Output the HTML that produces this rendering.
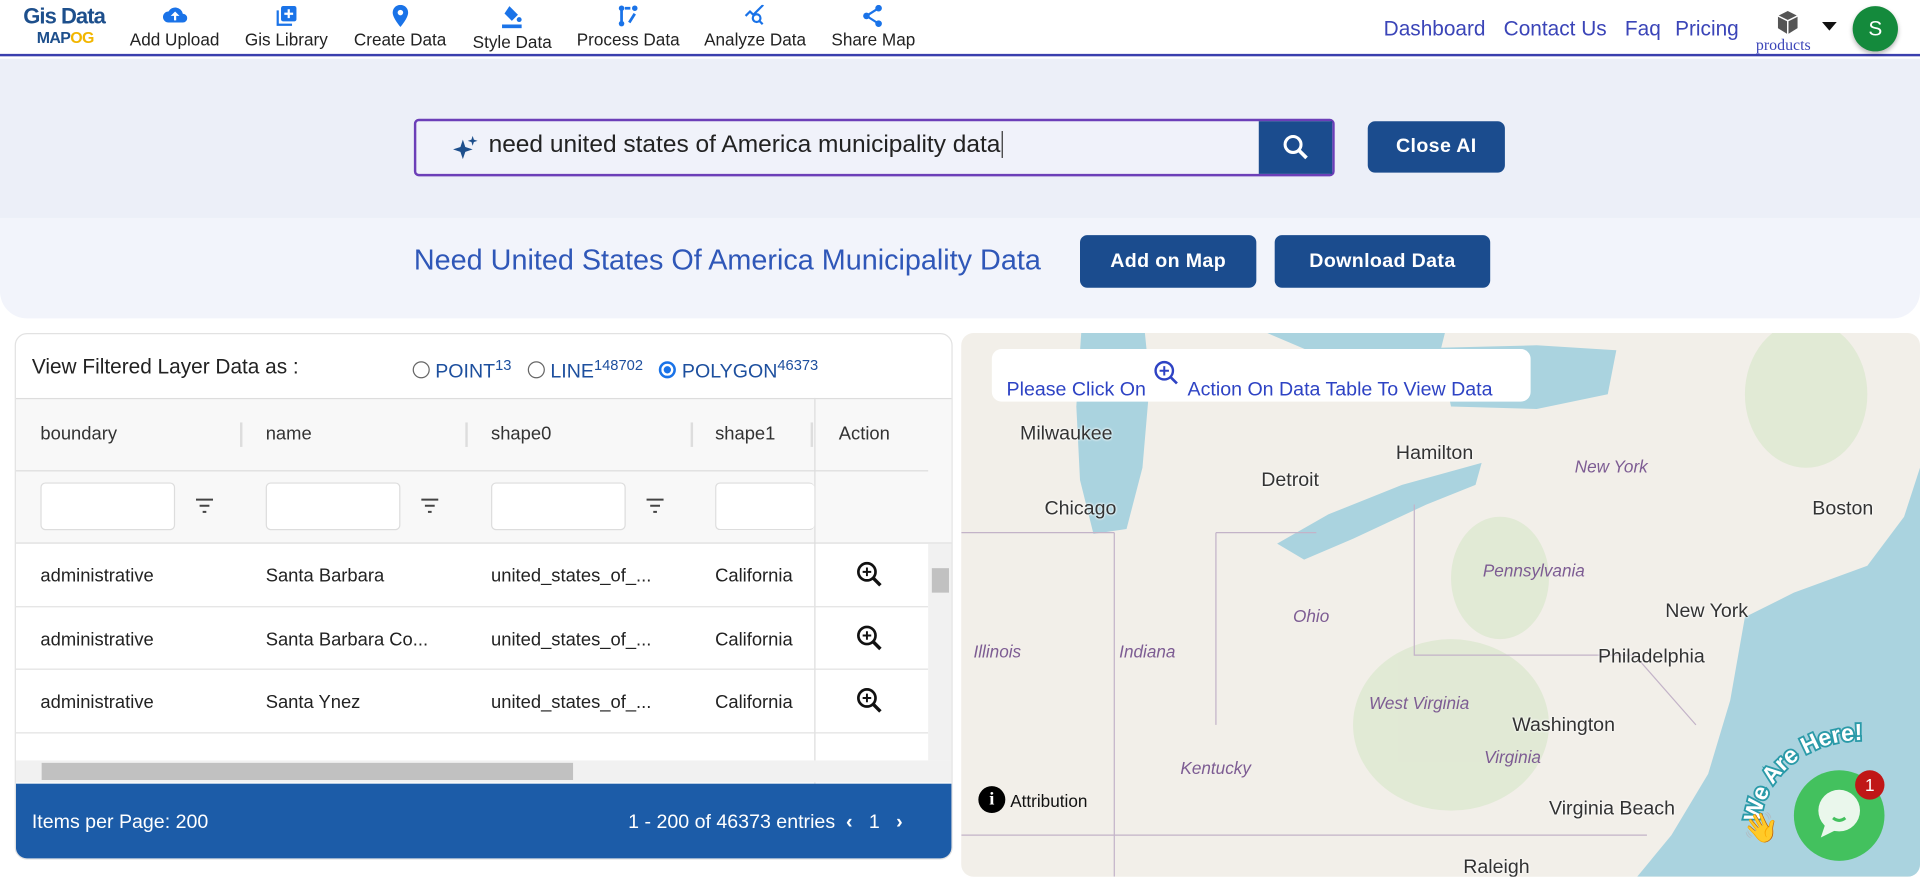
<!DOCTYPE html>
<html><head><meta charset="utf-8"><style>
*{box-sizing:border-box;margin:0;padding:0}
html,body{width:1920px;height:889px;overflow:hidden;background:#fff;font-family:"Liberation Sans",sans-serif}
#w{position:absolute;left:0;top:0;width:1568px;height:726px;transform:scale(1.22449);transform-origin:0 0}
.a{position:absolute}
.nav{left:0;top:0;width:1568px;height:46px;background:#fff;border-bottom:2px solid #3a3fae}
.ni{position:absolute;top:4px;text-align:center;font-size:14px;color:#222;white-space:nowrap}
.ni svg{display:block;margin:0 auto 2px}
.rl{position:absolute;top:14px;font-size:17px;color:#3b45b8}
.btn{position:absolute;background:#1b4c8e;color:#fff;border-radius:6px;font-size:16px;font-weight:bold;display:flex;align-items:center;justify-content:center;letter-spacing:.3px}
.th{position:absolute;font-size:15px;color:#333}
.td{position:absolute;font-size:15px;color:#222;white-space:nowrap}
.fi{position:absolute;width:110px;height:39px;border:1px solid #ddd;border-radius:4px;background:#fff}
.city{position:absolute;font-size:16px;color:#333;white-space:nowrap;text-shadow:0 0 2px #fff,0 0 2px #fff}
.st{position:absolute;font-size:14px;color:#7d5c93;font-style:italic;white-space:nowrap}
</style></head><body><div id="w">
<div class="a nav">
 <div class="a" style="left:19px;top:4px;font-weight:bold;font-size:18px;color:#1d4f8c;line-height:18px;letter-spacing:-.8px">Gis Data</div>
 <div class="a" style="left:30px;top:23px;font-weight:bold;font-size:13px;color:#1d4f8c;letter-spacing:-.5px">MAP<span style="color:#f2b600">OG</span></div>
 <div class="ni" style="left:106px"><svg width="22" height="18" viewBox="0 0 24 20"><path d="M19 8a7 7 0 0 0-13-2A5 5 0 0 0 6 16h13a4 4 0 0 0 0-8z" fill="#1a73e8"/><path d="M12 6l-4 4h3v4h2v-4h3z" fill="#fff"/></svg>Add Upload</div>
 <div class="ni" style="left:200px"><svg width="20" height="18" viewBox="0 0 20 20"><rect x="5" y="1" width="14" height="14" rx="2" fill="#1a73e8"/><path d="M2 5v13h13" stroke="#1a73e8" stroke-width="2" fill="none"/><path d="M12 4v8M8 8h8" stroke="#fff" stroke-width="2"/></svg>Gis Library</div>
 <div class="ni" style="left:289px"><svg width="16" height="18" viewBox="0 0 16 20"><path d="M8 0a7 7 0 0 0-7 7c0 5 7 13 7 13s7-8 7-13a7 7 0 0 0-7-7z" fill="#1a73e8"/><circle cx="8" cy="7" r="2.5" fill="#fff"/></svg>Create Data</div>
 <div class="ni" style="left:386px"><svg width="20" height="20" viewBox="0 0 20 20"><path d="M8 1l7 7-5 5-6-6z" fill="#1a73e8"/><circle cx="16" cy="12" r="2" fill="#1a73e8"/><rect x="2" y="16" width="16" height="3" fill="#1a73e8"/></svg>Style Data</div>
 <div class="ni" style="left:471px"><svg width="18" height="18" viewBox="0 0 20 20"><circle cx="4" cy="3" r="2.5" fill="#1a73e8"/><circle cx="4" cy="17" r="2.5" fill="#1a73e8"/><circle cx="16" cy="3" r="2.5" fill="#1a73e8"/><path d="M4 5v10M7 3h5M16 8l-5 8" stroke="#1a73e8" stroke-width="2.5"/></svg>Process Data</div>
 <div class="ni" style="left:575px"><svg width="20" height="18" viewBox="0 0 20 20"><path d="M1 10l4-4 3 3 9-9" stroke="#1a73e8" stroke-width="2" fill="none"/><circle cx="11" cy="12" r="3.5" stroke="#1a73e8" stroke-width="2" fill="none"/><path d="M13.5 14.5l3 3" stroke="#1a73e8" stroke-width="2"/></svg>Analyze Data</div>
 <div class="ni" style="left:679px"><svg width="18" height="18" viewBox="0 0 20 20"><circle cx="15" cy="3" r="3" fill="#1a73e8"/><circle cx="4" cy="10" r="3" fill="#1a73e8"/><circle cx="15" cy="17" r="3" fill="#1a73e8"/><path d="M15 3L4 10l11 7" stroke="#1a73e8" stroke-width="2" fill="none"/></svg>Share Map</div>
 <div class="rl" style="left:1130px">Dashboard</div>
 <div class="rl" style="left:1228px">Contact Us</div>
 <div class="rl" style="left:1327px">Faq</div>
 <div class="rl" style="left:1368px">Pricing</div>
 <svg class="a" style="left:1451px;top:9px" width="18" height="19" viewBox="0 0 18 19"><path d="M9 0l8 4v10l-8 5-8-5V4z" fill="#555"/><path d="M1 4l8 4 8-4M9 8v11" stroke="#fff" stroke-width="1.2" fill="none"/></svg>
 <div class="a" style="left:1434px;top:29px;font-family:'Liberation Serif',serif;font-size:13px;color:#3b45b8">products</div>
 <div class="a" style="left:1488px;top:18px;width:0;height:0;border-left:6px solid transparent;border-right:6px solid transparent;border-top:7px solid #111"></div>
 <div class="a" style="left:1513px;top:5px;width:37px;height:37px;border-radius:50%;background:#148a3c;color:#fff;font-size:17px;display:flex;align-items:center;justify-content:center;box-shadow:0 2px 4px rgba(0,0,0,.3)">S</div>
</div>
<div class="a" style="left:0;top:48px;width:1568px;height:212px;background:#f2f4fb;border-radius:0 0 22px 22px"></div>
<div class="a" style="left:0;top:48px;width:1568px;height:130px;background:#eceff8"></div>
<div class="a" style="left:338px;top:97px;width:752px;height:47px;border:2px solid #6c3fb8;border-radius:4px;background:#f0f2fa"></div>
<svg class="a" style="left:369px;top:110px" width="22" height="22" viewBox="0 0 22 22"><path d="M9 4l2 6 6 2-6 2-2 6-2-6-6-2 6-2z" fill="#1d4f8c"/><path d="M17 1l1 3 3 1-3 1-1 3-1-3-3-1 3-1z" fill="#1d4f8c"/></svg>
<div class="a" style="left:399px;top:107px;font-size:20px;color:#222;white-space:nowrap">need united states of America municipality data<span style="border-left:1px solid #333;margin-left:1px"></span></div>
<div class="a" style="left:1028px;top:99px;width:60px;height:43px;background:#1b4c8e"></div>
<svg class="a" style="left:1047px;top:109px" width="22" height="22" viewBox="0 0 22 22"><circle cx="9" cy="9" r="6.5" stroke="#fff" stroke-width="2.5" fill="none"/><path d="M14 14l6 6" stroke="#fff" stroke-width="3"/></svg>
<div class="btn" style="left:1117px;top:99px;width:112px;height:42px">Close AI</div>
<div class="a" style="left:338px;top:199px;font-size:23.5px;color:#2f57b8;white-space:nowrap">Need United States Of America Municipality Data</div>
<div class="btn" style="left:882px;top:192px;width:144px;height:43px">Add on Map</div>
<div class="btn" style="left:1041px;top:192px;width:176px;height:43px">Download Data</div>

<!-- table -->
<div class="a" style="left:12px;top:272px;width:766px;height:430px;border:1px solid #e2e2e2;border-radius:10px;background:#fff;overflow:hidden">
 <div class="a" style="left:13px;top:17px;font-size:17px;color:#222">View Filtered Layer Data as :</div>
 <div class="a" style="left:324px;top:18px;font-size:16px;color:#1d4f9e;white-space:nowrap">
  <span style="display:inline-block;width:14px;height:14px;border:1px solid #666;border-radius:50%;vertical-align:-1px"></span> POINT<sup style="font-size:12px">13</sup>&nbsp;&nbsp;
  <span style="display:inline-block;width:14px;height:14px;border:1px solid #666;border-radius:50%;vertical-align:-1px"></span> LINE<sup style="font-size:12px">148702</sup>&nbsp;&nbsp;
  <span style="display:inline-block;width:14px;height:14px;border:2px solid #1a73e8;border-radius:50%;vertical-align:-1px;box-shadow:inset 0 0 0 2px #fff;background:#1a73e8"></span> POLYGON<sup style="font-size:12px">46373</sup></div>
 <div class="a" style="left:0;top:52px;width:766px;height:119px;background:#f8f8f8;border-top:1px solid #ddd;border-bottom:1px solid #ddd"></div>
 <div class="a" style="left:0;top:111px;width:745px;height:1px;background:#ddd"></div>
 <div class="a" style="left:652px;top:52px;width:1px;height:315px;background:#ddd"></div>
 <div class="th" style="left:20px;top:73px">boundary</div>
 <div class="th" style="left:204px;top:73px">name</div>
 <div class="th" style="left:388px;top:73px">shape0</div>
 <div class="th" style="left:571px;top:73px">shape1</div>
 <div class="th" style="left:672px;top:73px">Action</div>
 <div class="a" style="left:183px;top:72px;width:2px;height:20px;background:#ddd"></div>
 <div class="a" style="left:367px;top:72px;width:2px;height:20px;background:#ddd"></div>
 <div class="a" style="left:551px;top:72px;width:2px;height:20px;background:#ddd"></div>
 <div class="a" style="left:649px;top:72px;width:2px;height:20px;background:#ddd"></div>
 <div class="fi" style="left:20px;top:121px"></div><div class="fi" style="left:204px;top:121px"></div><div class="fi" style="left:388px;top:121px"></div><div class="fi" style="left:571px;top:121px;width:81px;border-right:none"></div>
 <svg class="a" style="left:147px;top:134px" width="14" height="12"><path d="M0 1h14M3 6h8M5.5 11h3" stroke="#444" stroke-width="1.6"/></svg>
 <svg class="a" style="left:331px;top:134px" width="14" height="12"><path d="M0 1h14M3 6h8M5.5 11h3" stroke="#444" stroke-width="1.6"/></svg>
 <svg class="a" style="left:515px;top:134px" width="14" height="12"><path d="M0 1h14M3 6h8M5.5 11h3" stroke="#444" stroke-width="1.6"/></svg>
 <div class="td" style="left:20px;top:189px">administrative</div><div class="td" style="left:204px;top:189px">Santa Barbara</div><div class="td" style="left:388px;top:189px">united_states_of_...</div><div class="td" style="left:571px;top:189px">California</div>
 <div class="a" style="left:0;top:222px;width:745px;height:1px;background:#e2e2e2"></div>
 <div class="td" style="left:20px;top:241px">administrative</div><div class="td" style="left:204px;top:241px">Santa Barbara Co...</div><div class="td" style="left:388px;top:241px">united_states_of_...</div><div class="td" style="left:571px;top:241px">California</div>
 <div class="a" style="left:0;top:273px;width:745px;height:1px;background:#e2e2e2"></div>
 <div class="td" style="left:20px;top:292px">administrative</div><div class="td" style="left:204px;top:292px">Santa Ynez</div><div class="td" style="left:388px;top:292px">united_states_of_...</div><div class="td" style="left:571px;top:292px">California</div>
 <div class="a" style="left:0;top:325px;width:745px;height:1px;background:#e2e2e2"></div>
 <svg class="a" style="left:686px;top:185px" width="22" height="22" viewBox="0 0 22 22"><circle cx="9" cy="9" r="7" stroke="#111" stroke-width="2.2" fill="none"/><path d="M9 5.5v7M5.5 9h7" stroke="#111" stroke-width="1.6"/><path d="M14 14l6 6" stroke="#111" stroke-width="2.8"/></svg>
 <svg class="a" style="left:686px;top:237px" width="22" height="22" viewBox="0 0 22 22"><circle cx="9" cy="9" r="7" stroke="#111" stroke-width="2.2" fill="none"/><path d="M9 5.5v7M5.5 9h7" stroke="#111" stroke-width="1.6"/><path d="M14 14l6 6" stroke="#111" stroke-width="2.8"/></svg>
 <svg class="a" style="left:686px;top:288px" width="22" height="22" viewBox="0 0 22 22"><circle cx="9" cy="9" r="7" stroke="#111" stroke-width="2.2" fill="none"/><path d="M9 5.5v7M5.5 9h7" stroke="#111" stroke-width="1.6"/><path d="M14 14l6 6" stroke="#111" stroke-width="2.8"/></svg>
 <div class="a" style="left:745px;top:171px;width:20px;height:177px;background:#f1f1f1"></div>
 <div class="a" style="left:748px;top:191px;width:14px;height:20px;background:#c1c1c1"></div>
 <div class="a" style="left:0;top:348px;width:766px;height:18px;background:#f1f1f1"></div>
 <div class="a" style="left:21px;top:350px;width:434px;height:14px;background:#c1c1c1"></div>
 <div class="a" style="left:0;top:367px;width:766px;height:63px;background:#1c5ca8"></div>
 <div class="a" style="left:13px;top:390px;font-size:16px;color:#fff">Items per Page: 200</div>
 <div class="a" style="left:500px;top:390px;font-size:16px;color:#fff;white-space:nowrap">1 - 200 of 46373 entries &nbsp;<b>‹</b>&nbsp;&nbsp; 1 &nbsp;&nbsp;<b>›</b></div>
</div>

<!-- map -->
<div class="a" style="left:785px;top:272px;width:783px;height:444px;border-radius:10px;overflow:hidden;background:#f2efe9">
 <svg class="a" style="left:0;top:0" width="783" height="444">
  <g fill="#d6e6c8" opacity=".6"><ellipse cx="440" cy="200" rx="40" ry="50"/><ellipse cx="400" cy="320" rx="80" ry="70"/><ellipse cx="690" cy="50" rx="50" ry="60"/></g>
  <g fill="#aad3df">
   <path d="M98 0L150 0L154 40L148 110L135 160L108 164L97 120L94 60Z"/>
   <path d="M250 0L395 0L390 20L350 45L305 40L285 15Z"/>
   <path d="M258 172L300 148L360 124L425 106L420 124L380 140L320 168L280 185Z"/>
   <path d="M390 12L470 10L535 14L528 50L470 62L400 60Z"/>
   <path d="M783 110L770 150L740 190L680 212L640 232L628 300L610 360L580 410L552 444L783 444Z"/>
  </g>
  <g stroke="#c3b3c8" stroke-width="1" fill="none"><path d="M0 163H125M125 163V444M208 163V320M208 163H290M370 140V263H550M0 410H560M550 263L600 320"/></g>
 </svg>
 <div class="a" style="left:25px;top:13px;width:440px;height:43px;background:#fff;border-radius:8px"></div>
 <div class="a" style="left:37px;top:21px;font-size:16px;color:#2e43c4;white-space:nowrap">Please Click On <svg width="26" height="24" viewBox="0 0 22 22" style="vertical-align:6px"><circle cx="9" cy="9" r="6.5" stroke="#2e43c4" stroke-width="1.8" fill="none"/><path d="M9 5.5v7M5.5 9h7" stroke="#2e43c4" stroke-width="1.5"/><path d="M13.5 13.5l5 5" stroke="#2e43c4" stroke-width="2"/></svg> Action On Data Table To View Data</div>
 <div class="city" style="left:48px;top:74px">Milwaukee</div>
 <div class="city" style="left:68px;top:135px">Chicago</div>
 <div class="city" style="left:245px;top:112px">Detroit</div>
 <div class="city" style="left:355px;top:90px">Hamilton</div>
 <div class="st" style="left:501px;top:101px">New York</div>
 <div class="city" style="left:695px;top:135px">Boston</div>
 <div class="st" style="left:426px;top:186px">Pennsylvania</div>
 <div class="st" style="left:271px;top:223px">Ohio</div>
 <div class="city" style="left:575px;top:219px">New York</div>
 <div class="city" style="left:520px;top:256px">Philadelphia</div>
 <div class="st" style="left:10px;top:252px">Illinois</div>
 <div class="st" style="left:129px;top:252px">Indiana</div>
 <div class="st" style="left:333px;top:294px">West Virginia</div>
 <div class="city" style="left:450px;top:312px">Washington</div>
 <div class="st" style="left:427px;top:338px">Virginia</div>
 <div class="st" style="left:179px;top:347px">Kentucky</div>
 <div class="city" style="left:480px;top:380px">Virginia Beach</div>
 <div class="city" style="left:410px;top:428px">Raleigh</div>
 <div class="a" style="left:14px;top:370px;width:22px;height:22px;border-radius:50%;background:#000;color:#fff;font-weight:bold;font-size:15px;text-align:center;line-height:22px;font-family:'Liberation Serif',serif">i</div>
 <div class="a" style="left:40px;top:374px;font-size:14px;color:#111">Attribution</div>
 <svg class="a" style="left:620px;top:285px" width="163" height="159" viewBox="0 0 163 159">
  <defs><path id="arc" d="M32 115 C40 55 110 30 165 60"/></defs>
  <text font-family="Liberation Sans" font-weight="bold" font-size="19" fill="#fff" stroke="#2a9aa8" stroke-width="3" paint-order="stroke"><textPath href="#arc">We Are Here!</textPath></text>
  <circle cx="97" cy="109" r="37" fill="#43c15e"/>
  <circle cx="97" cy="105" r="17" fill="#eaf7ec"/>
  <path d="M86 115l-4 12 12-6z" fill="#eaf7ec"/>
  <path d="M92 111q5 4 10 0" stroke="#43c15e" stroke-width="2.5" fill="none"/>
  <circle cx="122" cy="84" r="12" fill="#c01717"/>
  <text x="122" y="89" text-anchor="middle" font-family="Liberation Sans" font-size="14" fill="#fff">1</text>
 </svg>
 <div class="a" style="left:638px;top:390px;font-size:24px">👋</div>
</div>
</div></body></html>
